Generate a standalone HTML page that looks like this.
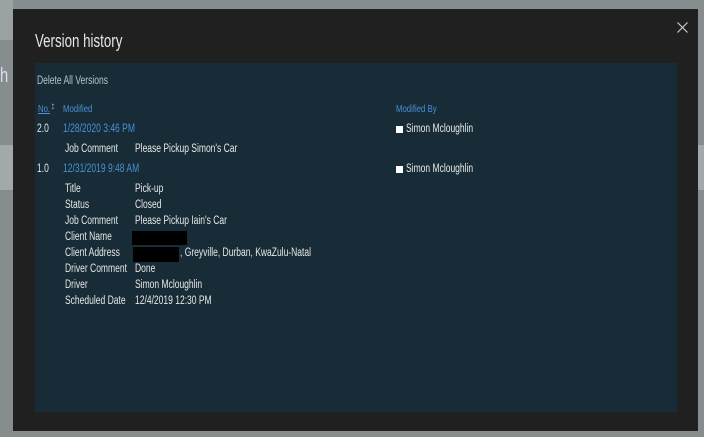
<!DOCTYPE html>
<html><head><meta charset="utf-8"><style>
body{margin:0;width:704px;height:437px;background:#858d8f;position:relative;overflow:hidden;font-family:"Liberation Sans",sans-serif;}
.a{position:absolute;white-space:nowrap;font-size:11.5px;color:#e8e8e8;line-height:12px;transform:scaleX(0.74);transform-origin:0 0}
.b{color:#4b8fd9}
.blk{position:absolute;background:#000}
.cb{position:absolute;width:7px;height:7px;background:#fff}
</style></head><body>
<div style="position:absolute;left:0;top:0;width:13px;height:40px;background:#9aa2a4"></div>
<div style="position:absolute;left:0;top:145px;width:13px;height:45px;background:#a2a9ab"></div>
<div class="a" style="left:0;top:64px;font-size:20px;color:#dde;line-height:24px">h</div>
<div style="position:absolute;left:698px;top:145px;width:6px;height:45px;background:#a2a9ab"></div>
<div style="position:absolute;left:13px;top:9px;width:685px;height:422px;background:#202020"></div>
<div class="a" style="left:35px;top:31px;font-size:18px;line-height:20px;color:#e6e6e6;transform:scaleX(0.74)">Version history</div>
<svg style="position:absolute;left:677px;top:22px" width="11" height="11"><path d="M0.5 0.5L10.5 10.5M10.5 0.5L0.5 10.5" stroke="#ccc" stroke-width="1.2"/></svg>
<div style="position:absolute;left:35px;top:63px;width:642px;height:349px;background:#172c36"></div>
<div class="a" style="left:37px;top:75px;color:#b8c4c8">Delete All Versions</div>
<div class="a b" style="left:38px;top:103px;font-size:10.5px;text-decoration:underline">No.</div>
<div class="a" style="left:51px;top:101px;font-size:10px;color:#ccc">&#8597;</div>
<div class="a b" style="left:63px;top:103px;font-size:10.5px">Modified</div>
<div class="a b" style="left:396px;top:103px;font-size:10.5px">Modified By</div>
<div class="a" style="left:37px;top:123px">2.0</div>
<div class="a b" style="left:63px;top:123px">1/28/2020 3:46 PM</div>
<div class="cb" style="left:396px;top:126px"></div>
<div class="a" style="left:406px;top:123px">Simon Mcloughlin</div>
<div class="a" style="left:65px;top:143px">Job Comment</div>
<div class="a" style="left:135px;top:143px">Please Pickup Simon's Car</div>
<div class="a" style="left:37px;top:163px">1.0</div>
<div class="a b" style="left:63px;top:163px">12/31/2019 9:48 AM</div>
<div class="cb" style="left:396px;top:166px"></div>
<div class="a" style="left:406px;top:163px">Simon Mcloughlin</div>
<div class="a" style="left:65px;top:183px">Title</div><div class="a" style="left:135px;top:183px">Pick-up</div>
<div class="a" style="left:65px;top:199px">Status</div><div class="a" style="left:135px;top:199px">Closed</div>
<div class="a" style="left:65px;top:215px">Job Comment</div><div class="a" style="left:135px;top:215px">Please Pickup Iain's Car</div>
<div class="a" style="left:65px;top:231px">Client Name</div><div class="blk" style="left:132px;top:231px;width:55px;height:14px"></div>
<div class="a" style="left:65px;top:247px">Client Address</div><div class="blk" style="left:133px;top:247px;width:46px;height:15px"></div>
<div class="a" style="left:180px;top:247px">, Greyville, Durban, KwaZulu-Natal</div>
<div class="a" style="left:65px;top:263px">Driver Comment</div><div class="a" style="left:135px;top:263px">Done</div>
<div class="a" style="left:65px;top:279px">Driver</div><div class="a" style="left:135px;top:279px">Simon Mcloughlin</div>
<div class="a" style="left:65px;top:295px">Scheduled Date</div><div class="a" style="left:135px;top:295px">12/4/2019 12:30 PM</div>
</body></html>
